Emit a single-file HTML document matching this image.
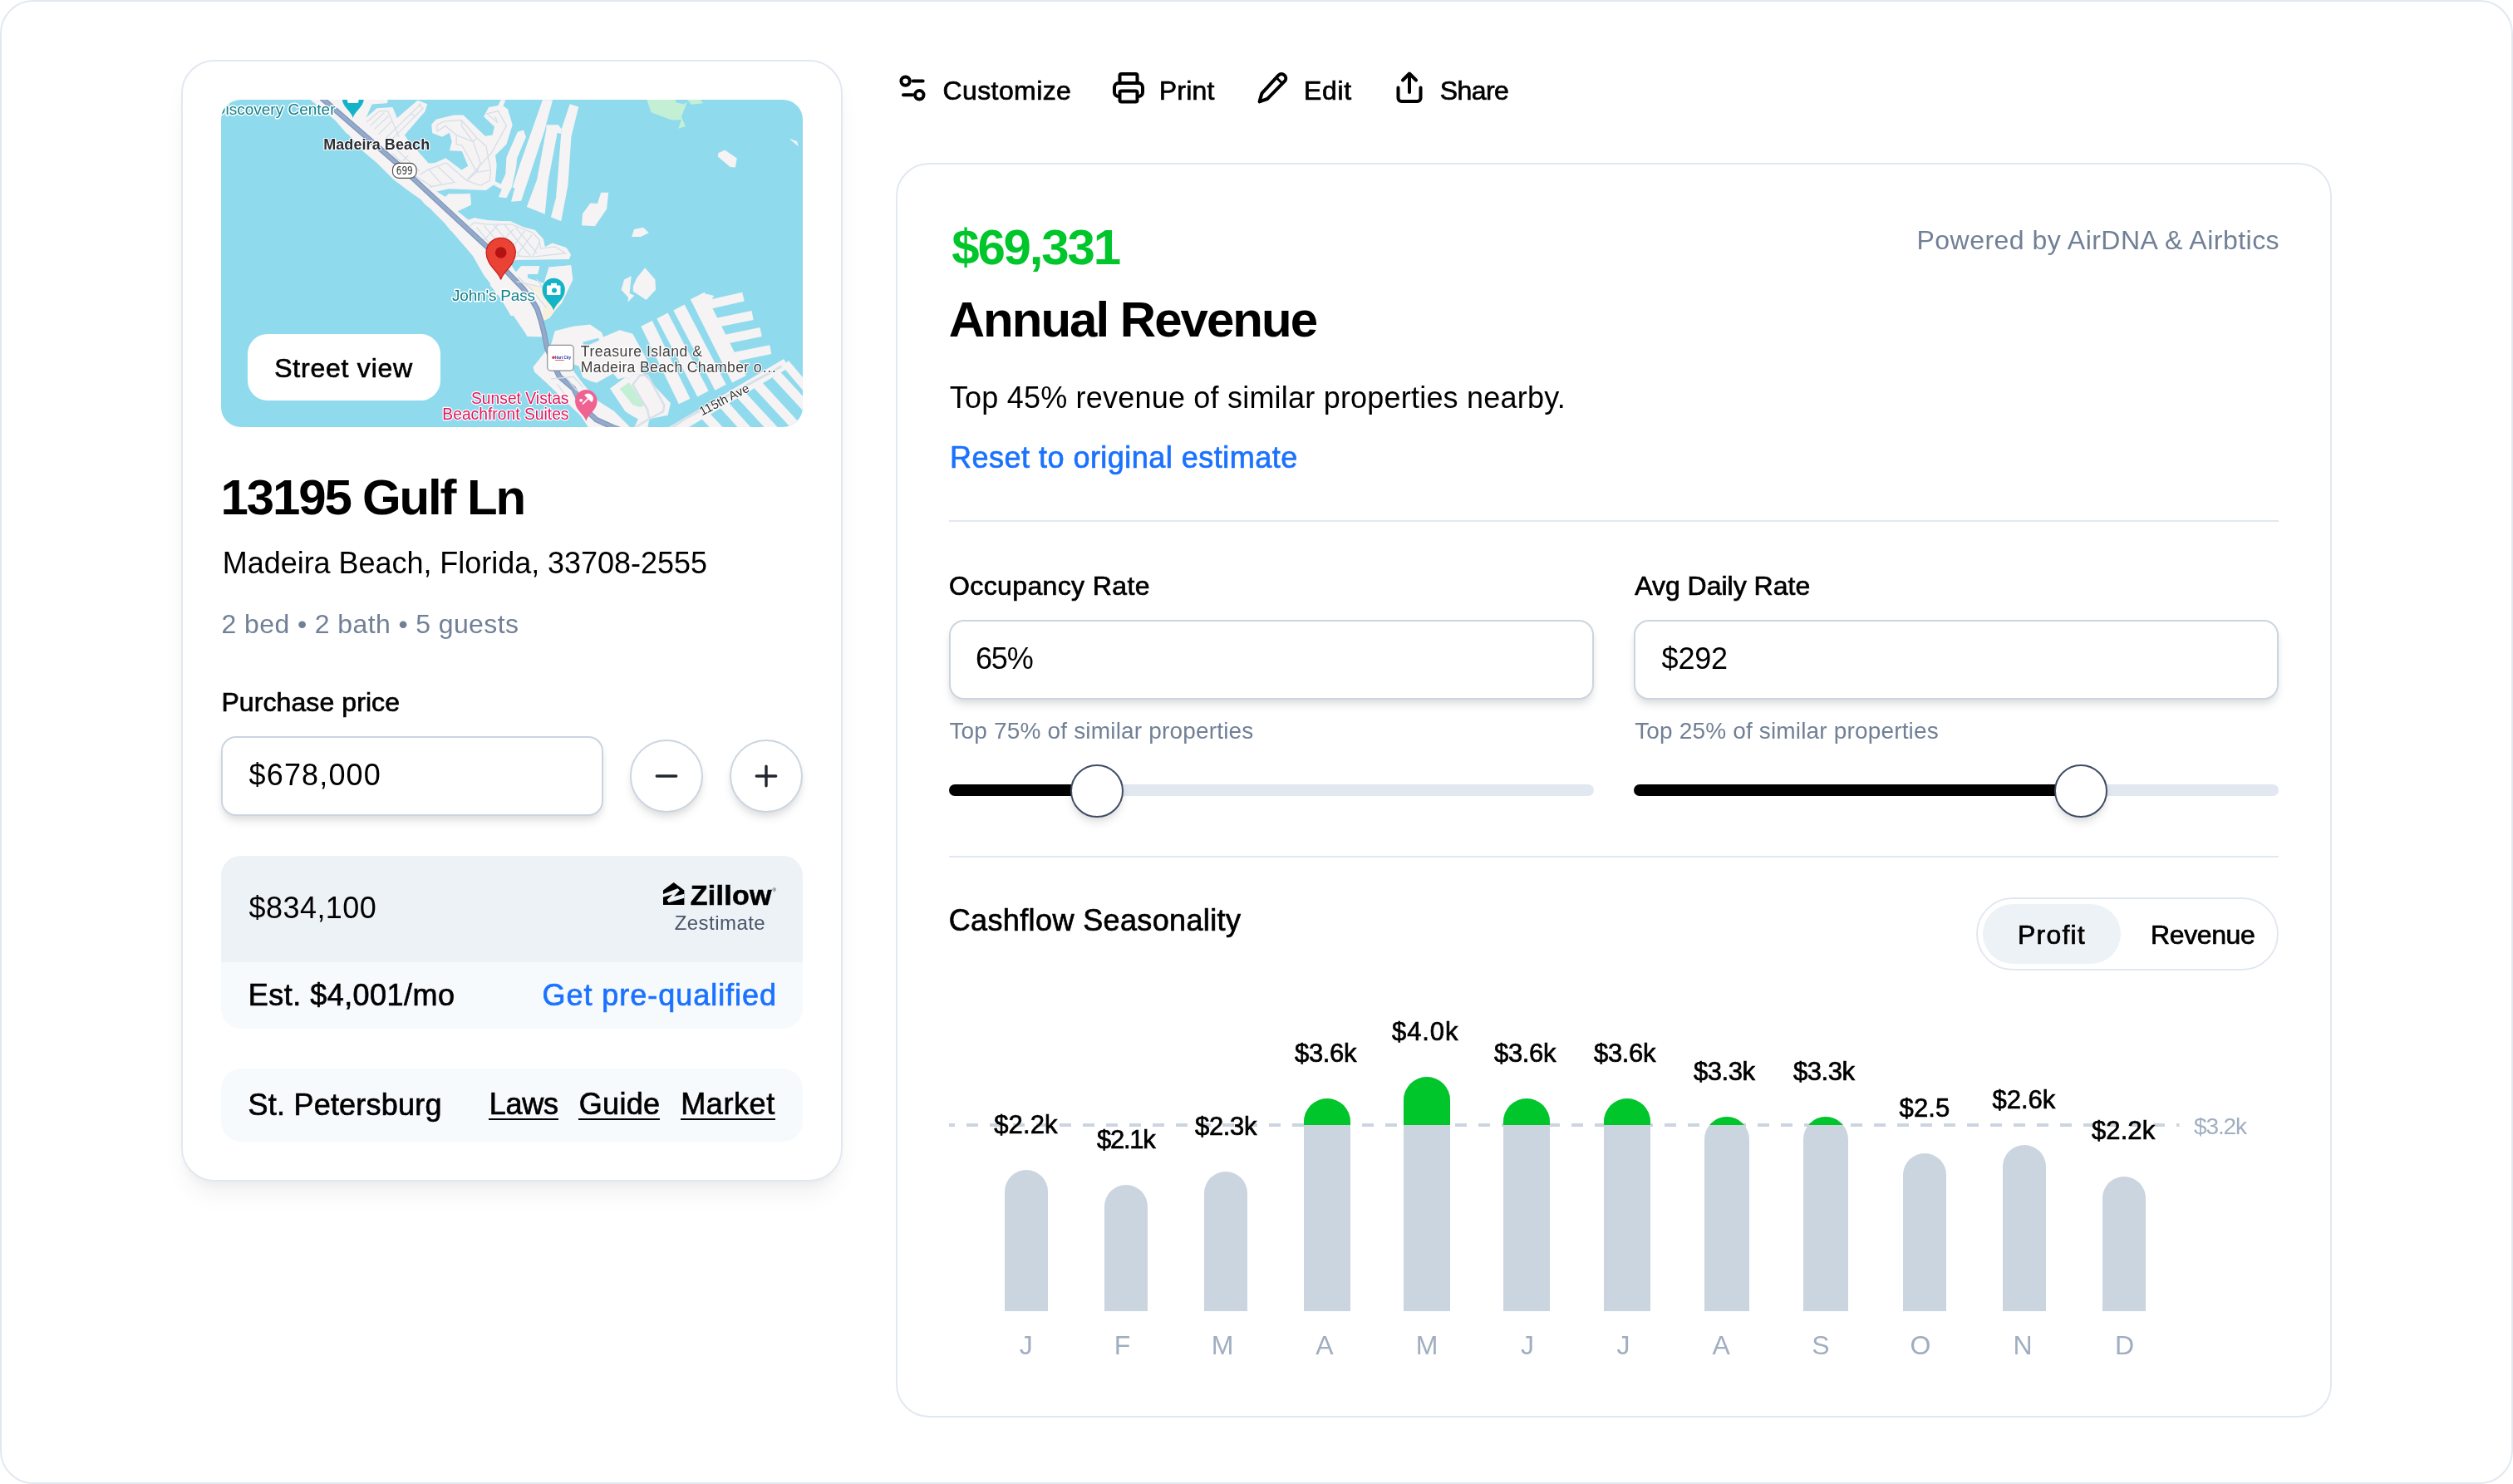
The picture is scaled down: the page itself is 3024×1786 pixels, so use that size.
<!DOCTYPE html>
<html lang="en"><head><meta charset="utf-8"><title>13195 Gulf Ln – Annual Revenue</title>
<style>
html,body{margin:0;padding:0}
body{width:3024px;height:1786px;position:relative;overflow:hidden;background:#fff;font-family:"Liberation Sans",sans-serif;color:#000}
.abs,.t,.bar{position:absolute;box-sizing:border-box}
.t{white-space:nowrap;line-height:1;font-weight:400}
.t.b{font-weight:700}
.t.m{-webkit-text-stroke:0.7px currentColor}
.frame{left:0;top:0;width:3024px;height:1786px;border:2px solid #e2e8f0;border-radius:40px}
.card{border:2px solid #e2e8f0;border-radius:40px;background:#fff}
.inp{border:2px solid #cbd5e0;border-radius:18px;background:#fff;box-shadow:0 8px 12px -2px rgba(0,0,0,.10),0 4px 8px -2px rgba(0,0,0,.06)}
.circ{border:2px solid #cbd5e0;border-radius:50%;background:#fff;box-shadow:0 8px 12px -2px rgba(0,0,0,.10),0 4px 8px -2px rgba(0,0,0,.06)}
.hr{height:2px;background:#e2e8f0;left:1142px;width:1600px}
.bar{background:#cbd5e0;overflow:hidden}
.gr{background:#00c52b;width:100%}
.track{height:14px;border-radius:7px;background:#e2e8f0}
.fill{height:14px;border-radius:7px;background:#000}
.thumb{width:64px;height:64px;border-radius:50%;background:#fff;border:2px solid #3f4c63;box-shadow:0 8px 12px -2px rgba(0,0,0,.10),0 4px 8px -2px rgba(0,0,0,.06)}
.ul{height:2.2px;background:#000}
svg{position:absolute;overflow:visible}
#zil{-webkit-text-stroke:0.6px #000}
</style></head><body>
<div class="abs frame"></div>

<!-- left card -->
<div class="abs card" style="left:218px;top:72px;width:796px;height:1350px;box-shadow:0 20px 30px -6px rgba(0,0,0,.06),0 8px 12px -4px rgba(0,0,0,.035)"></div>
<div class="abs" id="map" style="left:266px;top:120px;width:700px;height:394px;border-radius:24px;overflow:hidden;background:#90daee">
<svg style="left:0;top:0;will-change:transform" width="700" height="394" viewBox="0 0 700 394"><polygon points="107.2,-0.3 200.3,-0.3 200.3,4.0 172.4,6.2 166.6,16.9 180.2,29.8 151.6,41.3 137.3,24.8" fill="#f5f3f3" />
<polygon points="147.3,0.2 200.8,0.2 199.7,4.1 181.9,4.9 174.6,21.4 187.4,10.3 206.4,9.1 211.9,22.0 236.5,0.8 248.2,5.2 245.4,14.2 220.9,42.6 226.4,50.4 249.8,76.6 257.6,76.0 270.4,70.2 289.4,84.4 297.2,79.7 289.9,62.1 274.9,61.3 277.7,50.4 274.9,39.8 266.0,44.8 254.3,40.3 253.2,29.8 258.7,23.8 279.9,18.6 291.6,18.6 317.8,43.7 326.7,42.6 328.9,32.5 316.1,20.3 322.2,9.1 333.4,6.9 336.7,0.2 342.3,0.2 339.5,7.5 345.1,11.4 350.7,30.3 343.4,53.7 330.0,67.1 331.7,78.2 330.0,98.3 336.7,101.6 327.8,102.7 318.9,108.9 274.3,107.2 259.3,110.5 269.9,116.7 273.8,113.3 300.0,113.3 300.9,126.1 284.4,133.9 297.7,144.5 304.4,142.3 321.1,145.1 349.0,146.7 365.7,154.0 376.8,158.0 276.6,158.0 263.2,140.6 245.4,126.1 240.9,120.6 225.3,109.4 207.5,96.1 187.4,76.0 171.6,62.7 137.3,24.1 107.2,-0.3" fill="#f5f3f3" />
<polygon points="356.8,38.7 364.0,36.4 367.0,44.8 356.2,70.4 355.1,81.6 350.1,105.0 343.4,118.3 333.9,117.2 337.8,107.7 327.8,102.7 336.7,101.6 342.3,89.4 343.4,69.3" fill="#f5f3f3" />
<polygon points="386.9,0.2 399.1,0.2 391.3,29.2 389.7,35.9 361.2,121.7 349.0,122.8 353.4,106.6 350.7,105.5 357.9,82.7" fill="#f5f3f3" />
<polygon points="391.3,30.3 405.8,30.3 409.7,35.3 409.2,40.9 404.7,39.8 393.6,98.3 389.7,137.8 367.9,128.9 380.2,96.1 391.3,35.9" fill="#f5f3f3" />
<polygon points="419.7,5.2 430.3,8.6 421.4,44.8 417.5,102.7 409.2,146.2 396.9,141.2 403.0,118.3 404.7,98.3 409.2,40.9 409.7,35.3" fill="#f5f3f3" />
<polygon points="444.3,124.4 452.9,125.1 457.2,111.8 466.2,111.8 464.1,131.5 450.0,152.3 434.0,151.2 435.0,137.3" fill="#f5f3f3" />
<polygon points="497.0,155.9 508.0,153.7 514.8,160.2 505.2,164.9 494.1,164.9" fill="#f5f3f3" />
<polygon points="598.3,64.2 606.2,60.6 620.8,70.6 618.8,81.4 612.6,81.1 597.9,68.5" fill="#f5f3f3" />
<polygon points="683.5,46.7 692.9,49.9 695.0,56.6" fill="#f5f3f3" />
<polygon points="512.3,-0.3 546.7,-0.3 547.4,3.3 556.8,5.5 561.0,2.6 553.9,20.5 558.9,32.0 550.3,34.8 553.9,24.1 542.4,24.4 517.6,15.2" fill="#c3f0d5" />
<polygon points="561.0,-0.3 576.8,-0.3 580.1,4.3 565.8,5.7" fill="#c3f0d5" />
<polygon points="254.0,133.4 254.0,113.4 269.6,117.3 299.7,112.8 300.8,126.7 284.1,134.5 297.5,145.7 305.3,142.3 320.9,145.7 348.7,146.2 356.5,151.8 377.7,156.8 387.7,167.4 389.9,176.9 398.8,172.4 415.6,178.0 421.1,186.4 418.9,191.9 354.3,193.0 348.7,198.1 354.8,207.5 361.0,200.3 383.2,200.3 381.0,209.7 368.8,209.7 368.8,214.8 388.8,221.4 394.4,201.4 421.1,199.2 423.1,216.4 410.0,244.8 395.5,260.0 348.7,260.0 332.0,231.5 316.4,211.4 303.0,188.0 268.5,147.9" fill="#f5f3f3" />
<polygon points="354.8,207.8 361.1,200.4 383.3,200.4 381.1,210.0 368.8,210.0 368.5,214.5 388.5,221.1 391.1,212.3 395.5,201.5 421.1,199.3 423.3,216.7 413.7,236.7 404.1,250.8 395.2,262.7 385.5,267.1 388.5,280.0 389.6,285.6 368.5,284.9 365.5,280.0 346.2,251.5 324.0,223.4 324.0,211.5 342.5,201.9" fill="#f5f3f3" />
<polygon points="361.1,221.1 380.3,224.9 398.1,231.5 413.7,236.7 404.1,250.8 395.2,262.7 385.5,267.1 387.0,257.5 390.7,245.6 384.8,235.2 371.4,226.3" fill="#f8f0dd" />
<polygon points="481.5,228.7 485.1,216.5 493.7,212.2 491.6,233.0 497.3,235.8 489.4,243.7 490.1,238.0" fill="#f5f3f3" />
<polygon points="510.2,202.2 522.4,216.5 523.1,228.7 511.6,240.9 495.9,230.8 495.9,224.4 500.2,214.4" fill="#f5f3f3" />
<polygon points="401.7,278.3 424.0,272.8 444.1,270.5 458.0,280.0 460.2,285.6 479.7,277.2 495.3,281.7 513.1,314.0 504.2,321.8 508.7,330.7 495.3,330.7 490.9,336.3 486.4,334.1 477.5,336.3 471.9,329.6 451.9,340.7 444.1,338.5 435.1,334.1 430.7,320.7 412.9,314.0 396.1,298.4" fill="#f5f3f3" />
<polygon points="435.1,291.7 454.1,286.7 455.2,289.5 445.2,293.9 437.4,298.4" fill="#90daee" />
<polygon points="375.5,321.8 391.3,301.7 399.9,290.3 407.0,281.7 418.5,274.5 424.2,276.0 421.4,287.4 411.3,298.9 418.5,318.9 435.7,341.9 452.9,361.9 472.9,374.8 491.6,393.4 491.6,397.7 444.3,397.7 432.8,380.5 391.3,340.4 377.0,327.5" fill="#f5f3f3" />
<polygon points="468.0,347.4 486.4,334.1 490.9,336.3 495.3,330.7 508.7,330.7 541.0,365.2 537.6,379.7 515.4,384.2 513.1,396.0 496.4,396.0 502.0,384.2 495.3,380.8 486.4,375.3" fill="#f5f3f3" />
<polygon points="479.7,348.0 490.9,340.2 509.8,367.5 504.2,370.3 495.3,366.9" fill="#c3f0d5" />
<polygon points="538.5,408.4 683.4,322.6 677.1,312.1 532.3,397.9" fill="#f5f3f3" />
<polygon points="505.3,272.7 550.9,366.3 564.5,359.7 518.8,266.1" fill="#f5f3f3" />
<polygon points="524.3,263.4 573.3,357.6 586.7,350.6 537.6,256.5" fill="#f5f3f3" />
<polygon points="544.3,253.4 594.5,349.8 607.8,342.8 557.7,246.5" fill="#f5f3f3" />
<polygon points="564.8,240.2 615.0,340.5 631.9,332.0 581.8,231.8" fill="#f5f3f3" />
<polygon points="565.5,242.7 568.8,238.2 584.4,233.8 593.4,236.0 584.4,249.4" fill="#f5f3f3" />
<polygon points="585.7,252.6 629.7,242.5 627.2,231.7 583.2,241.7" fill="#f5f3f3" />
<polygon points="597.3,273.8 640.7,264.9 638.5,253.9 595.0,262.9" fill="#f5f3f3" />
<polygon points="607.9,293.8 650.8,284.9 648.5,274.0 605.6,282.9" fill="#f5f3f3" />
<polygon points="619.0,315.0 662.4,306.1 660.2,295.2 616.8,304.1" fill="#f5f3f3" />
<polygon points="675.3,320.6 701.0,350.7 708.6,344.2 683.0,314.1" fill="#f5f3f3" />
<polygon points="663.7,334.7 704.9,379.2 713.5,371.3 672.3,326.7" fill="#f5f3f3" />
<polygon points="641.4,346.9 692.7,402.6 701.3,394.7 650.0,339.0" fill="#f5f3f3" />
<polygon points="620.3,358.1 662.6,403.8 671.2,395.8 628.8,350.1" fill="#f5f3f3" />
<polygon points="599.0,369.2 629.1,402.6 637.8,394.8 607.7,361.3" fill="#f5f3f3" />
<polygon points="578.0,383.7 595.8,402.7 604.3,394.7 586.5,375.7" fill="#f5f3f3" />
<polyline points="539.9,396.4 557.7,384.2 613.4,354.1 674.7,320.7" fill="none" stroke="#d9e0ea" stroke-width="3" />
<polyline points="495.3,396.4 513.1,385.3 532.1,375.3 533.2,367.5 513.1,331.8 504.2,331.8 495.3,343.0 513.1,373.0 515.4,384.2" fill="none" stroke="#d9e0ea" stroke-width="2.5" />
<polyline points="121.0,-2.0 208.9,74.2 322.0,178.8 342.5,205.6 364.0,227.8 375.9,244.1 380.3,251.5 385.0,266.0 388.5,280.0 392.0,298.0 399.0,316.0 407.0,333.0 424.0,347.4 435.1,369.7 451.9,385.3 471.9,394.2 480.0,397.0" fill="none" stroke="#7f97bd" stroke-width="6.5" stroke-linejoin="round"/>
<polyline points="121.0,-2.0 208.9,74.2 322.0,178.8 342.5,205.6 364.0,227.8 375.9,244.1 380.3,251.5 385.0,266.0 388.5,280.0 392.0,298.0 399.0,316.0 407.0,333.0 424.0,347.4 435.1,369.7 451.9,385.3 471.9,394.2 480.0,397.0" fill="none" stroke="#93aacb" stroke-width="4" stroke-linejoin="round"/><polyline points="175.2,27.0 190.8,13.6 200.8,13.6 214.2,44.8" fill="none" stroke="#d6dfe9" stroke-width="1.3" />
<polyline points="179.6,31.4 196.3,15.8" fill="none" stroke="#d6dfe9" stroke-width="1.3" />
<polyline points="184.1,35.9 201.9,19.2" fill="none" stroke="#d6dfe9" stroke-width="1.3" />
<polyline points="189.7,41.5 205.3,25.9" fill="none" stroke="#d6dfe9" stroke-width="1.3" />
<polyline points="198.6,45.9 240.9,4.7" fill="none" stroke="#d6dfe9" stroke-width="1.3" />
<polyline points="203.0,50.4 243.1,10.3 237.6,5.8" fill="none" stroke="#d6dfe9" stroke-width="1.3" />
<polyline points="228.7,16.9 234.2,20.3" fill="none" stroke="#d6dfe9" stroke-width="1.3" />
<polyline points="206.4,64.9 232.0,90.5 254.3,105.0" fill="none" stroke="#d6dfe9" stroke-width="1.3" />
<polyline points="211.9,60.4 238.7,86.0" fill="none" stroke="#d6dfe9" stroke-width="1.3" />
<polyline points="218.6,73.8 225.3,67.1" fill="none" stroke="#d6dfe9" stroke-width="1.3" />
<polyline points="238.7,90.5 249.8,83.8 271.0,76.0 295.5,97.2 312.2,103.3 323.4,97.2" fill="none" stroke="#d6dfe9" stroke-width="1.3" />
<polyline points="249.8,83.8 265.4,101.6" fill="none" stroke="#d6dfe9" stroke-width="1.3" />
<polyline points="261.0,80.5 281.0,99.4 250.9,105.0" fill="none" stroke="#d6dfe9" stroke-width="1.3" />
<polyline points="295.5,97.2 325.6,63.7 343.4,31.4 333.4,13.6 320.0,16.9 332.3,27.0 330.0,20.3" fill="none" stroke="#d6dfe9" stroke-width="1.3" />
<polyline points="259.8,38.1 259.8,30.3 268.8,25.9 289.4,24.7 307.8,45.9 318.9,55.9 324.5,84.9 323.4,97.2" fill="none" stroke="#d6dfe9" stroke-width="1.3" />
<polyline points="259.8,38.1 269.9,31.4 283.2,42.6 283.2,53.7 289.9,54.8 307.8,87.1 295.5,97.2" fill="none" stroke="#d6dfe9" stroke-width="1.3" />
<polyline points="289.4,24.7 289.9,32.5 303.3,50.4 312.2,76.0 307.8,87.1" fill="none" stroke="#d6dfe9" stroke-width="1.3" />
<polyline points="307.8,87.1 324.5,84.9" fill="none" stroke="#d6dfe9" stroke-width="1.3" />
<polyline points="283.2,42.6 303.3,50.4 307.8,45.9" fill="none" stroke="#d6dfe9" stroke-width="1.3" />
<polyline points="299.7,152.4 304.1,147.9 320.9,150.1 349.8,150.1 375.4,160.2 383.2,169.1 384.4,179.1 402.2,176.9 414.4,184.7 376.6,189.1 354.3,188.0" fill="none" stroke="#d6dfe9" stroke-width="1.3" />
<polyline points="307.5,153.5 326.4,176.9" fill="none" stroke="#d6dfe9" stroke-width="1.3" />
<polyline points="316.4,151.3 343.1,183.6" fill="none" stroke="#d6dfe9" stroke-width="1.3" />
<polyline points="327.5,150.1 359.8,188.0" fill="none" stroke="#d6dfe9" stroke-width="1.3" />
<polyline points="340.9,150.1 372.1,188.0" fill="none" stroke="#d6dfe9" stroke-width="1.3" />
<polyline points="354.3,153.5 379.9,184.7" fill="none" stroke="#d6dfe9" stroke-width="1.3" />
<polyline points="334.2,149.0 316.4,169.1" fill="none" stroke="#d6dfe9" stroke-width="1.3" />
<polyline points="352.1,155.7 332.0,176.9" fill="none" stroke="#d6dfe9" stroke-width="1.3" />
<polyline points="365.4,157.9 345.4,184.7" fill="none" stroke="#d6dfe9" stroke-width="1.3" />
<polyline points="374.3,162.4 357.6,184.7" fill="none" stroke="#d6dfe9" stroke-width="1.3" />
<polyline points="383.2,171.3 375.4,188.0" fill="none" stroke="#d6dfe9" stroke-width="1.3" />
<polyline points="356.9,212.9 372.7,227.2 391.3,250.2" fill="none" stroke="#d6dfe9" stroke-width="1.3" />
<polyline points="355.5,218.7 387.0,225.8 379.8,215.8" fill="none" stroke="#d6dfe9" stroke-width="1.3" />
<polyline points="397.0,336.1 424.2,333.3 435.7,346.2" fill="none" stroke="#d6dfe9" stroke-width="1.3" />
<polyline points="404.2,341.9 412.8,353.3" fill="none" stroke="#d6dfe9" stroke-width="1.3" />
<polyline points="415.6,334.7 428.5,350.5" fill="none" stroke="#d6dfe9" stroke-width="1.3" /><g font-family="&quot;Liberation Sans&quot;,sans-serif"><path d="M158.8 21.9 C156.2 12.7 145.6 9.1 145.6 -2.8 A13.2 13.2 0 1 1 172.0 -2.8 C172.0 9.1 161.4 12.7 158.8 21.9 Z" fill="#14b4c8" />
<rect x="152" y="-8" width="13.5" height="12" rx="2" fill="#fff"/>
<text x="137.5" y="18.4" font-size="19" font-weight="400" fill="#11818b" text-anchor="end" stroke="#fff" stroke-width="3" paint-order="stroke" stroke-linejoin="round" >Discovery Center</text>
<text x="123.2" y="59.9" font-size="18" font-weight="700" fill="#2b2e34" text-anchor="start" stroke="#fff" stroke-width="2.2" paint-order="stroke" stroke-linejoin="round" textLength="128">Madeira Beach</text>
<rect x="206.5" y="76.4" width="28.6" height="18" rx="7.5" fill="#fff" stroke="#4d4d4d" stroke-width="1.1"/>
<text x="220.8" y="90.3" font-size="13.5" fill="#3a3a3a" text-anchor="middle" font-family="&quot;DejaVu Sans&quot;,sans-serif" textLength="20" lengthAdjust="spacingAndGlyphs">699</text>
<text x="278.0" y="241.5" font-size="19" font-weight="400" fill="#11818b" text-anchor="start" stroke="#fff" stroke-width="3" paint-order="stroke" stroke-linejoin="round" textLength="100">John&#x27;s Pass</text>
<path d="M400.2 253.8 C397.5 244.3 386.6 240.6 386.6 228.4 A13.6 13.6 0 1 1 413.8 228.4 C413.8 240.6 402.9 244.3 400.2 253.8 Z" fill="#14b4c8" />
<rect x="392" y="223.4" width="16.5" height="11.5" rx="1.2" fill="#fff"/><rect x="397" y="220.9" width="7" height="3" fill="#fff"/><circle cx="401" cy="229.4" r="3" fill="#14b4c8"/>
<path d="M336.7 216.4 C334.7 207.4 319.1 199.0 319.1 184.0 A17.6 17.6 0 1 1 354.3 184.0 C354.3 199.0 338.7 207.4 336.7 216.4 Z" fill="#ea4335" stroke="#c5221f" stroke-width="1.3"/><circle cx="336.7" cy="184.0" r="6.8" fill="#b31412"/>
<rect x="392.7" y="295.3" width="31.5" height="30.8" rx="4" fill="#fff" stroke="#8a8f96" stroke-width="1.2"/>
<circle cx="400" cy="310.3" r="1.8" fill="#e53935"/><text x="402" y="312" font-size="4.6" font-weight="700" fill="#2233aa">Hart City</text><rect x="402" y="313.2" width="11" height="0.8" fill="#e53935"/>
<text x="432.8" y="308.9" font-size="17.6" font-weight="400" fill="#403c3a" text-anchor="start" stroke="#fff" stroke-width="2.4" paint-order="stroke" stroke-linejoin="round" textLength="146.2">Treasure Island &amp;</text>
<text x="432.8" y="327.8" font-size="17.6" font-weight="400" fill="#403c3a" text-anchor="start" stroke="#fff" stroke-width="2.4" paint-order="stroke" stroke-linejoin="round" textLength="235.7">Madeira Beach Chamber o…</text>
<text x="418.5" y="365.5" font-size="19.3" font-weight="400" fill="#e2185b" text-anchor="end" stroke="#fff" stroke-width="2.4" paint-order="stroke" stroke-linejoin="round" >Sunset Vistas</text>
<text x="418.5" y="385.1" font-size="19.3" font-weight="400" fill="#e2185b" text-anchor="end" stroke="#fff" stroke-width="2.4" paint-order="stroke" stroke-linejoin="round" >Beachfront Suites</text>
<path d="M439.3 387.0 C436.7 377.8 426.1 374.2 426.1 362.3 A13.2 13.2 0 1 1 452.5 362.3 C452.5 374.2 441.9 377.8 439.3 387.0 Z" fill="#f06292" />
<circle cx="433.2" cy="361.8" r="1.9" fill="#fff"/><g transform="translate(441.8 359.7) rotate(45)"><path d="M-6.3 0.3A6.3 6.3 0 0 1 6.3 0.3Z" fill="#fff"/><path d="M0 0V9.5" stroke="#fff" stroke-width="1.7"/></g>
<text transform="translate(605.5 361) rotate(-27.5)" font-size="15" fill="#2f2f2f" text-anchor="middle" stroke="#fff" stroke-width="2" paint-order="stroke" y="5">115th Ave</text></g></svg>
</div>
<div class="abs" style="left:298px;top:402px;width:232px;height:80px;border-radius:24px;background:#fff"></div>

<div class="abs inp" style="left:266px;top:886px;width:460px;height:96px"></div>
<div class="abs circ" style="left:758px;top:890px;width:88px;height:88px"></div>
<div class="abs circ" style="left:878px;top:890px;width:88px;height:88px"></div>
<svg style="left:758px;top:890px" width="88" height="88" viewBox="0 0 88 88"><path d="M32.3 44H55.7" stroke="#22262e" stroke-width="3.4" stroke-linecap="round" fill="none"/></svg>
<svg style="left:878px;top:890px" width="88" height="88" viewBox="0 0 88 88"><path d="M32.3 44H55.7M44 32.3V55.7" stroke="#22262e" stroke-width="3.4" stroke-linecap="round" fill="none"/></svg>

<div class="abs" style="left:266px;top:1030px;width:700px;height:208px;border-radius:24px;overflow:hidden;background:#f7fafc"><div style="height:128px;background:#edf2f7"></div></div>
<svg style="left:797.7px;top:1062px" width="26" height="28" viewBox="0 0 26 28"><polygon points="12.7,0 25.4,9.6 25.4,27.1 0,27.1 0,9.6" fill="#000"/><polygon points="0,14.0 17.5,7.2 19.8,9.6 12.9,16.9 25.4,13.7 25.4,18.7 6.6,24.2 4.6,21.1 11.2,14.5 0,17.7" fill="#edf2f7"/></svg>
<div class="abs" style="left:266px;top:1286px;width:700px;height:88px;border-radius:24px;background:#f7fafc"></div>
<div class="abs ul" style="left:588.1px;top:1346px;width:84px"></div>
<div class="abs ul" style="left:696.3px;top:1346px;width:97.5px"></div>
<div class="abs ul" style="left:819.1px;top:1346px;width:114.3px"></div>

<!-- toolbar icons -->
<svg style="left:1082px;top:90px" width="32" height="32" viewBox="0 0 32 32" fill="none" stroke="#000" stroke-width="4" stroke-linecap="round"><circle cx="7.6" cy="7.6" r="5.2"/><path d="M16.7 7.6H28.6"/><circle cx="24.3" cy="24.3" r="5.2"/><path d="M5 24.3H16"/></svg>
<svg style="left:1339px;top:86px" width="38" height="39" viewBox="0 0 38 39" fill="none" stroke="#000" stroke-width="4" stroke-linejoin="round"><rect x="8.5" y="3" width="21" height="11" rx="2"/><rect x="2" y="14" width="34" height="16" rx="5"/><rect x="8.5" y="23.5" width="21" height="13" rx="2" fill="#fff"/></svg>
<svg style="left:1513px;top:86px" width="38" height="39" viewBox="0 0 38 39" fill="none" stroke="#000" stroke-width="4" stroke-linejoin="round" stroke-linecap="round"><path d="M25.6 4.4a5.2 5.2 0 0 1 8 6.4L12 33 2.6 36.4l2.8-10Z"/><path d="M24.6 9l4.6 4.6" stroke-width="3"/></svg>
<svg style="left:1680px;top:86px" width="32" height="39" viewBox="0 0 32 39" fill="none" stroke="#000" stroke-width="4" stroke-linejoin="round" stroke-linecap="round"><path d="M16 2.5V25M8 10.5l8-8 8 8"/><path d="M2.5 19.5V32a4 4 0 0 0 4 4h19a4 4 0 0 0 4-4V19.5"/></svg>

<!-- right card -->
<div class="abs card" style="left:1078px;top:196px;width:1728px;height:1510px"></div>
<div class="abs hr" style="top:626px"></div>
<div class="abs hr" style="top:1030px"></div>
<div class="abs inp" style="left:1142px;top:746px;width:776px;height:96px"></div>
<div class="abs inp" style="left:1966px;top:746px;width:776px;height:96px"></div>
<div class="abs track" style="left:1142px;top:944px;width:776px"></div>
<div class="abs fill" style="left:1142px;top:944px;width:180px"></div>
<div class="abs thumb" style="left:1288px;top:920px"></div>
<div class="abs track" style="left:1966px;top:944px;width:776px"></div>
<div class="abs fill" style="left:1966px;top:944px;width:540px"></div>
<div class="abs thumb" style="left:2472px;top:920px"></div>

<div class="abs" style="left:2378px;top:1080px;width:364px;height:88px;border:2px solid #e2e8f0;border-radius:44px"></div>
<div class="abs" style="left:2386px;top:1088px;width:166px;height:72px;border-radius:36px;background:#edf2f7"></div>

<svg style="left:0;top:0" width="3024" height="1786"><line x1="1142" y1="1354" x2="2622.5" y2="1354" stroke="#cbd5e0" stroke-width="4" stroke-dasharray="14 14" stroke-dashoffset="7"/></svg>
<div class="bar" style="left:1209px;top:1408px;width:52px;height:170px;border-radius:26.0px 26.0px 0 0;"></div>
<div class="bar" style="left:1329px;top:1426px;width:52px;height:152px;border-radius:26.0px 26.0px 0 0;"></div>
<div class="bar" style="left:1449px;top:1410px;width:52px;height:168px;border-radius:26.0px 26.0px 0 0;"></div>
<div class="bar" style="left:1569px;top:1322px;width:56px;height:256px;border-radius:28.0px 28.0px 0 0;"><div class="gr" style="height:32px"></div></div>
<div class="bar" style="left:1689px;top:1296px;width:56px;height:282px;border-radius:28.0px 28.0px 0 0;"><div class="gr" style="height:58px"></div></div>
<div class="bar" style="left:1809px;top:1322px;width:56px;height:256px;border-radius:28.0px 28.0px 0 0;"><div class="gr" style="height:32px"></div></div>
<div class="bar" style="left:1929.5px;top:1322px;width:56px;height:256px;border-radius:28.0px 28.0px 0 0;"><div class="gr" style="height:32px"></div></div>
<div class="bar" style="left:2050.5px;top:1344px;width:54px;height:234px;border-radius:27.0px 27.0px 0 0;"><div class="gr" style="height:10px"></div></div>
<div class="bar" style="left:2170px;top:1344px;width:54px;height:234px;border-radius:27.0px 27.0px 0 0;"><div class="gr" style="height:10px"></div></div>
<div class="bar" style="left:2289.5px;top:1388px;width:52px;height:190px;border-radius:26.0px 26.0px 0 0;"></div>
<div class="bar" style="left:2409.7px;top:1378px;width:52px;height:200px;border-radius:26.0px 26.0px 0 0;"></div>
<div class="bar" style="left:2529.7px;top:1416px;width:52px;height:162px;border-radius:26.0px 26.0px 0 0;"></div>
<div id="txt" style="position:absolute;left:0;top:0;width:3024px;height:1786px;will-change:transform">
<div id="h1" class="t b" style="left:265.60px;top:569.40px;font-size:60px;letter-spacing:-2.167px;color:#000;">13195 Gulf Ln</div>
<div id="addr" class="t" style="left:267.80px;top:659.62px;font-size:36px;letter-spacing:-0.038px;color:#000;">Madeira Beach, Florida, 33708-2555</div>
<div id="meta" class="t" style="left:266.60px;top:734.51px;font-size:32px;letter-spacing:0.392px;color:#718096;">2 bed • 2 bath • 5 guests</div>
<div id="pp" class="t m" style="left:266.40px;top:828.91px;font-size:32px;letter-spacing:0.089px;color:#000;">Purchase price</div>
<div id="ppv" class="t" style="left:299.60px;top:915.22px;font-size:36px;letter-spacing:1.153px;color:#000;">$678,000</div>
<div id="zv" class="t" style="left:299.60px;top:1075.02px;font-size:36px;letter-spacing:0.424px;color:#000;">$834,100</div>
<div id="est" class="t m" style="left:298.80px;top:1179.52px;font-size:36px;letter-spacing:0.468px;color:#000;">Est. $4,001/mo</div>
<div id="preq" class="t m" style="left:652.50px;top:1179.52px;font-size:36px;letter-spacing:0.961px;color:#1a72ff;">Get pre-qualified</div>
<div id="zest" class="t" style="left:811.70px;top:1099.38px;font-size:24px;letter-spacing:0.448px;color:#4a5568;">Zestimate</div>
<div id="zil" class="t b" style="left:830.80px;top:1060.31px;font-size:34px;letter-spacing:0.245px;color:#000;">Zillow</div>
<div id="reg" class="t" style="left:929.60px;top:1067.92px;font-size:6px;letter-spacing:0.000px;color:#000;">®</div>
<div id="stp" class="t m" style="left:298.60px;top:1311.52px;font-size:36px;letter-spacing:0.208px;color:#000;">St. Petersburg</div>
<div id="laws" class="t m" style="left:588.70px;top:1311.32px;font-size:36px;letter-spacing:-0.247px;color:#000;">Laws</div>
<div id="guide" class="t m" style="left:696.80px;top:1311.32px;font-size:36px;letter-spacing:0.289px;color:#000;">Guide</div>
<div id="market" class="t m" style="left:819.30px;top:1311.32px;font-size:36px;letter-spacing:0.576px;color:#000;">Market</div>
<div id="sv" class="t m" style="left:330.20px;top:426.91px;font-size:32px;letter-spacing:0.773px;color:#000;">Street view</div>
<div id="tb1" class="t m" style="left:1134.50px;top:92.71px;font-size:32px;letter-spacing:0.405px;color:#000;">Customize</div>
<div id="tb2" class="t m" style="left:1394.80px;top:92.71px;font-size:32px;letter-spacing:0.173px;color:#000;">Print</div>
<div id="tb3" class="t m" style="left:1569.00px;top:92.71px;font-size:32px;letter-spacing:0.650px;color:#000;">Edit</div>
<div id="tb4" class="t m" style="left:1732.70px;top:92.71px;font-size:32px;letter-spacing:-0.548px;color:#000;">Share</div>
<div id="rev" class="t b" style="left:1145.20px;top:267.50px;font-size:60px;letter-spacing:-2.153px;color:#00c52b;">$69,331</div>
<div id="ar" class="t b" style="left:1141.70px;top:355.20px;font-size:60px;letter-spacing:-1.979px;color:#000;">Annual Revenue</div>
<div id="top45" class="t" style="left:1142.80px;top:461.42px;font-size:36px;letter-spacing:0.209px;color:#000;">Top 45% revenue of similar properties nearby.</div>
<div id="reset" class="t m" style="left:1143.00px;top:533.02px;font-size:36px;letter-spacing:0.481px;color:#1a72ff;">Reset to original estimate</div>
<div id="pow" class="t" style="left:2306.50px;top:272.81px;font-size:32px;letter-spacing:0.475px;color:#718096;">Powered by AirDNA &amp; Airbtics</div>
<div id="occ" class="t m" style="left:1142.00px;top:688.91px;font-size:32px;letter-spacing:0.380px;color:#000;">Occupancy Rate</div>
<div id="adr" class="t m" style="left:1967.20px;top:688.91px;font-size:32px;letter-spacing:-0.005px;color:#000;">Avg Daily Rate</div>
<div id="occv" class="t" style="left:1173.90px;top:775.32px;font-size:36px;letter-spacing:-1.121px;color:#000;">65%</div>
<div id="adrv" class="t" style="left:1999.60px;top:775.32px;font-size:36px;letter-spacing:-0.188px;color:#000;">$292</div>
<div id="t75" class="t" style="left:1142.40px;top:866.09px;font-size:28px;letter-spacing:0.173px;color:#718096;">Top 75% of similar properties</div>
<div id="t25" class="t" style="left:1967.20px;top:866.09px;font-size:28px;letter-spacing:0.159px;color:#718096;">Top 25% of similar properties</div>
<div id="cs" class="t m" style="left:1141.70px;top:1089.92px;font-size:36px;letter-spacing:0.375px;color:#000;">Cashflow Seasonality</div>
<div id="profit" class="t m" style="left:2428.00px;top:1109.11px;font-size:32px;letter-spacing:1.201px;color:#000;">Profit</div>
<div id="revenue" class="t m" style="left:2588.00px;top:1109.11px;font-size:32px;letter-spacing:-0.383px;color:#000;">Revenue</div>
<div id="avg" class="t" style="left:2640.00px;top:1342.49px;font-size:28px;letter-spacing:-1.124px;color:#a0aec0;">$3.2k</div>
<div id="bl0" class="t m" style="left:1196.20px;top:1337.95px;font-size:31px;letter-spacing:0.116px;color:#000;">$2.2k</div>
<div id="bl1" class="t m" style="left:1320.00px;top:1356.25px;font-size:31px;letter-spacing:-1.284px;color:#000;">$2.1k</div>
<div id="bl2" class="t m" style="left:1438.00px;top:1339.95px;font-size:31px;letter-spacing:-0.334px;color:#000;">$2.3k</div>
<div id="bl3" class="t m" style="left:1558.00px;top:1251.75px;font-size:31px;letter-spacing:-0.334px;color:#000;">$3.6k</div>
<div id="bl4" class="t m" style="left:1675.00px;top:1225.75px;font-size:31px;letter-spacing:0.916px;color:#000;">$4.0k</div>
<div id="bl5" class="t m" style="left:1798.00px;top:1251.75px;font-size:31px;letter-spacing:-0.334px;color:#000;">$3.6k</div>
<div id="bl6" class="t m" style="left:1918.00px;top:1251.75px;font-size:31px;letter-spacing:-0.334px;color:#000;">$3.6k</div>
<div id="bl7" class="t m" style="left:2038.00px;top:1273.75px;font-size:31px;letter-spacing:-0.459px;color:#000;">$3.3k</div>
<div id="bl8" class="t m" style="left:2158.00px;top:1273.75px;font-size:31px;letter-spacing:-0.459px;color:#000;">$3.3k</div>
<div id="bl9" class="t m" style="left:2285.50px;top:1317.95px;font-size:31px;letter-spacing:0.135px;color:#000;">$2.5</div>
<div id="bl10" class="t m" style="left:2397.50px;top:1307.95px;font-size:31px;letter-spacing:-0.034px;color:#000;">$2.6k</div>
<div id="bl11" class="t m" style="left:2517.00px;top:1345.45px;font-size:31px;letter-spacing:0.091px;color:#000;">$2.2k</div>
<div id="mo0" class="t" style="left:1226.70px;top:1602.71px;font-size:32px;letter-spacing:0.000px;color:#a0aec0;">J</div>
<div id="mo1" class="t" style="left:1340.70px;top:1602.71px;font-size:32px;letter-spacing:0.000px;color:#a0aec0;">F</div>
<div id="mo2" class="t" style="left:1457.80px;top:1602.71px;font-size:32px;letter-spacing:0.000px;color:#a0aec0;">M</div>
<div id="mo3" class="t" style="left:1583.30px;top:1602.71px;font-size:32px;letter-spacing:0.000px;color:#a0aec0;">A</div>
<div id="mo4" class="t" style="left:1703.70px;top:1602.71px;font-size:32px;letter-spacing:0.000px;color:#a0aec0;">M</div>
<div id="mo5" class="t" style="left:1830.00px;top:1602.71px;font-size:32px;letter-spacing:0.000px;color:#a0aec0;">J</div>
<div id="mo6" class="t" style="left:1945.50px;top:1602.71px;font-size:32px;letter-spacing:0.000px;color:#a0aec0;">J</div>
<div id="mo7" class="t" style="left:2060.50px;top:1602.71px;font-size:32px;letter-spacing:0.000px;color:#a0aec0;">A</div>
<div id="mo8" class="t" style="left:2180.30px;top:1602.71px;font-size:32px;letter-spacing:0.000px;color:#a0aec0;">S</div>
<div id="mo9" class="t" style="left:2298.50px;top:1602.71px;font-size:32px;letter-spacing:0.000px;color:#a0aec0;">O</div>
<div id="mo10" class="t" style="left:2422.50px;top:1602.71px;font-size:32px;letter-spacing:0.000px;color:#a0aec0;">N</div>
<div id="mo11" class="t" style="left:2545.00px;top:1602.71px;font-size:32px;letter-spacing:0.000px;color:#a0aec0;">D</div>
</div>
</body></html>
